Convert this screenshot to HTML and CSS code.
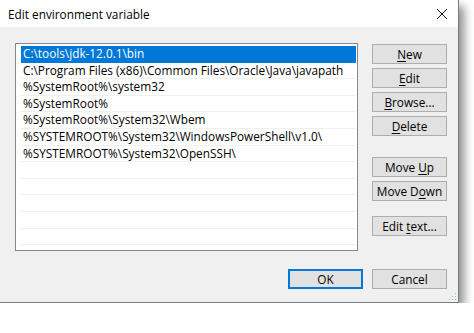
FILE: index.html
```html
<!DOCTYPE html>
<html lang="en">
<head>
  <meta charset="UTF-8">
  <title>Edit environment variable</title>
  <link rel="stylesheet" href="styles.css">
</head>
<body>

  <div class="window">
    <!-- title bar -->
    <div class="titlebar">
      <span class="title">Edit environment variable</span>
      <svg class="close" width="12" height="12" viewBox="0 0 12 12">
        <path d="M1,1 L11,11 M11,1 L1,11"></path>
      </svg>
    </div>

    <div class="content">
      <div class="main">
        <!-- path list -->
        <div class="listbox">
          <div class="row selected">C:\tools\jdk-12.0.1\bin</div>
          <div class="row">C:\Program Files (x86)\Common Files\Oracle\Java\javapath</div>
          <div class="row">%SystemRoot%\system32</div>
          <div class="row">%SystemRoot%</div>
          <div class="row">%SystemRoot%\System32\Wbem</div>
          <div class="row">%SYSTEMROOT%\System32\WindowsPowerShell\v1.0\</div>
          <div class="row">%SYSTEMROOT%\System32\OpenSSH\</div>
          <div class="row"></div>
          <div class="row"></div>
          <div class="row"></div>
          <div class="row"></div>
          <div class="row"></div>
        </div>

        <!-- side buttons -->
        <div class="side">
          <div class="group">
            <button class="btn"><u>N</u>ew</button>
            <button class="btn"><u>E</u>dit</button>
            <button class="btn"><u>B</u>rowse...</button>
            <button class="btn"><u>D</u>elete</button>
          </div>
          <div class="group move">
            <button class="btn">Move <u>U</u>p</button>
            <button class="btn">Move D<u>o</u>wn</button>
          </div>
          <div class="group edittext">
            <button class="btn">Edit <u>t</u>ext...</button>
          </div>
        </div>
      </div>

      <div class="footer">
        <button class="btn default">OK</button>
        <button class="btn">Cancel</button>
      </div>

      <svg class="grip" width="10" height="10" viewBox="0 0 10 10">
        <rect x="8" y="2" width="1" height="1"></rect>
        <rect x="5" y="5" width="1" height="1"></rect>
        <rect x="8" y="5" width="1" height="1"></rect>
        <rect x="2" y="8" width="1" height="1"></rect>
        <rect x="5" y="8" width="1" height="1"></rect>
        <rect x="8" y="8" width="1" height="1"></rect>
      </svg>
    </div>
  </div>

</body>
</html>
```

FILE: styles.css
```css
body{
  margin: 0;
  background: #ffffff;
  font-family: "Open Sans", "Noto Sans", sans-serif;
  font-size: 11.8px;
  color: #000000;
}

.window{
  width: 459px;
  height: 303px;
  display: flex;
  flex-direction: column;
  border-right: 1px solid #6f7d8b;
  border-bottom: 1px solid #6f7d8b;
  box-shadow: 5px 6px 9px rgba(0,0,0,0.45);
  box-sizing: border-box;
}

.titlebar{
  height: 27px;
  background: #ffffff;
  display: flex;
  align-items: center;
  justify-content: space-between;
  padding: 0 8px 0 8px;
  box-sizing: border-box;
}

.close{
  fill: none;
  stroke: #111111;
  stroke-width: 1;
  margin-right: 2px;
}

.content{
  flex: 1;
  position: relative;
  background: #f0f0f0;
  padding: 16px 11px 0 15px;
  display: flex;
  flex-direction: column;
}

.main{
  display: flex;
  gap: 14px;
}

/* list box */
.listbox{
  width: 343px;
  height: 208px;
  box-sizing: border-box;
  border: 1px solid #828790;
  background: #ffffff;
  padding: 2px 1px 0 5px;
}

.row{
  height: 16.6px;
  box-sizing: border-box;
  border-bottom: 1px solid #f0f0f0;
  padding-left: 2px;
  line-height: 15px;
  white-space: nowrap;
  overflow: hidden;
}

.row.selected{
  background: #0078d7;
  color: #ffffff;
  border-bottom-color: #0078d7;
}

/* buttons */
.side{
  display: flex;
  flex-direction: column;
  padding-top: 1px;
}

.group{
  display: flex;
  flex-direction: column;
  gap: 4px;
}

.move{
  margin-top: 21px;
}

.edittext{
  margin-top: 15px;
}

.btn{
  width: 75px;
  height: 20px;
  box-sizing: border-box;
  background: #e1e1e1;
  border: 1px solid #adadad;
  font-family: inherit;
  font-size: 11.8px;
  color: #000000;
  padding: 0;
  line-height: 16px;
}

.btn u{
  text-underline-offset: 2px;
}

.btn.default{
  border: 2px solid #0078d7;
}

.footer{
  display: flex;
  justify-content: flex-end;
  gap: 9px;
  margin-top: 18px;
}

.grip{
  position: absolute;
  right: 1px;
  bottom: 1px;
  fill: #b4b4b4;
}
```
